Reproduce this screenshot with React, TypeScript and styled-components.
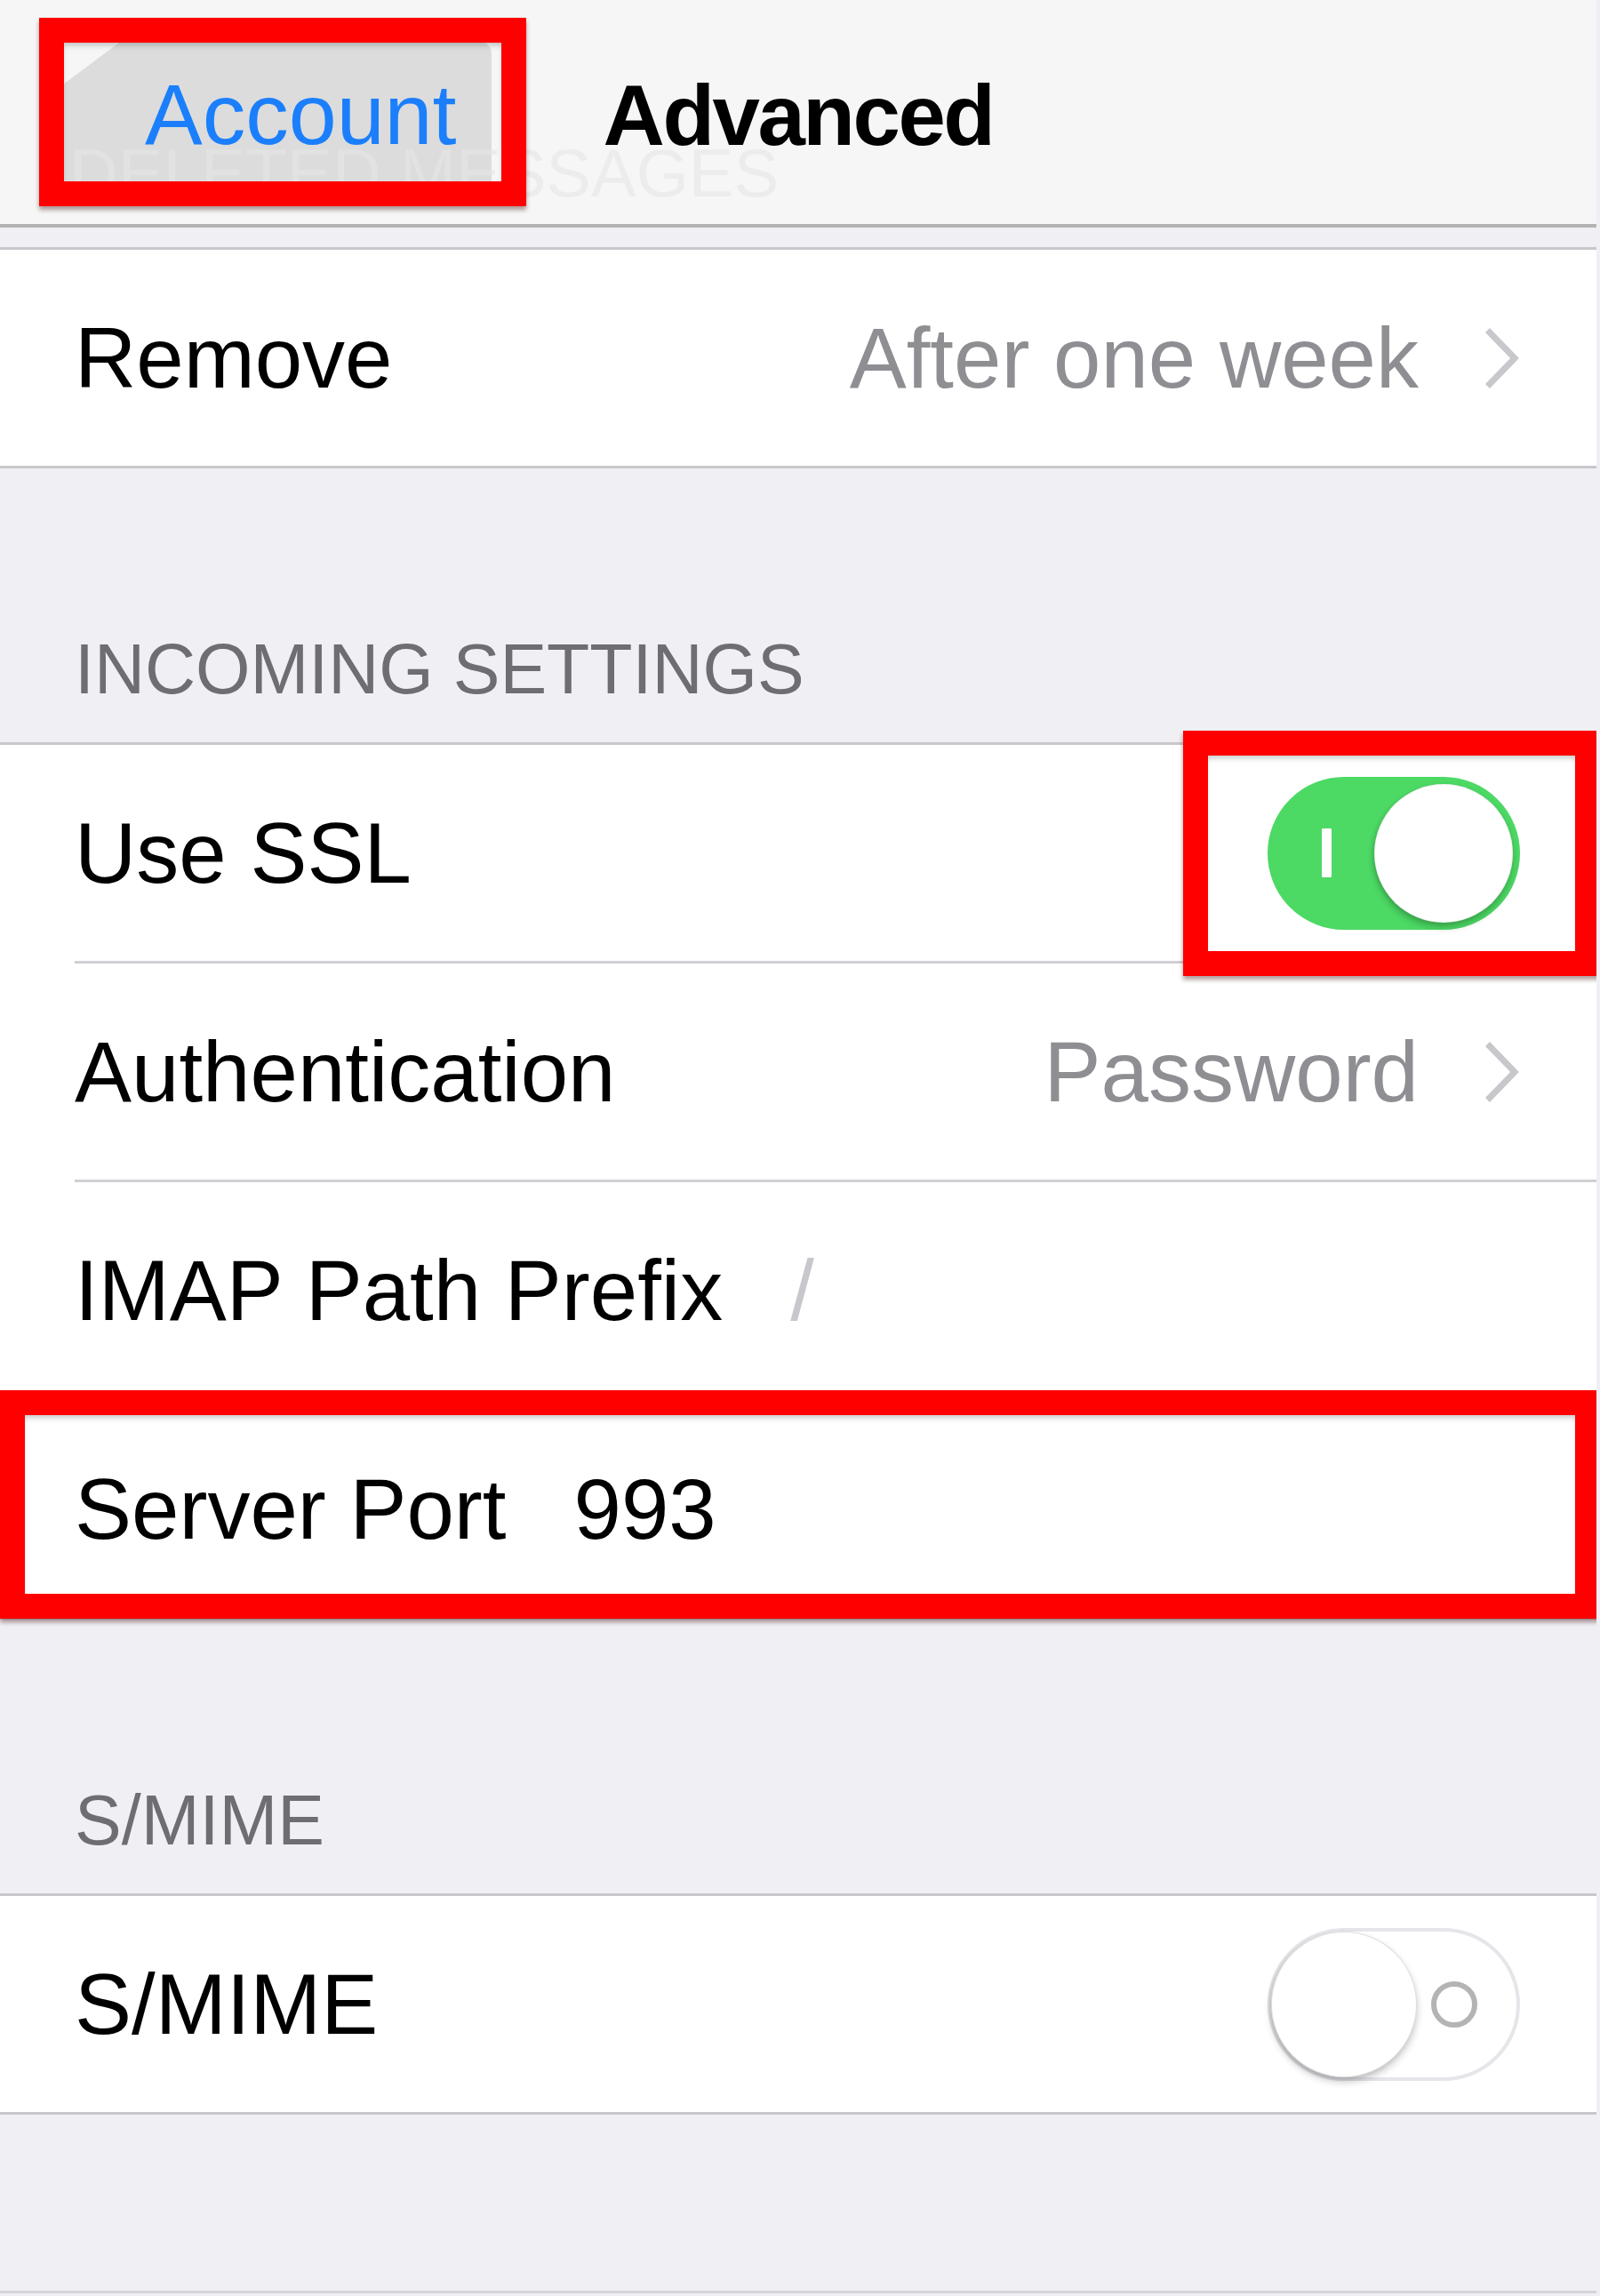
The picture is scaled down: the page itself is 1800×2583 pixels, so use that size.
import React from "react";
import styled, { createGlobalStyle } from "styled-components";

const GlobalStyle = createGlobalStyle`
  html, body {
    margin: 0;
    padding: 0;
    overflow: hidden;
  }
  body {
    background: #eff0f5;
    font-family: "Liberation Sans", Arial, Helvetica, sans-serif;
    -webkit-font-smoothing: antialiased;
  }
`;

const Page = styled.div`
  width: 1796px;
  height: 2583px;
  overflow: hidden;
  background: #efeff4;
`;

const NavBar = styled.header`
  position: relative;
  isolation: isolate;
  height: 256px;
  box-sizing: border-box;
  padding-top: 7px;
  background: #f6f6f6;
  border-bottom: 4px solid #b2b2b2;
  display: grid;
  grid-template-columns: 1fr auto 1fr;
  align-items: center;
`;

const BackButton = styled.div`
  position: relative;
  justify-self: start;
  margin-left: 51px;
  width: 502px;
  height: 169px;
  box-sizing: border-box;
  padding-left: 112px;
  display: flex;
  align-items: center;

  &::before {
    content: "";
    position: absolute;
    inset: 0;
    z-index: 0;
    background: #dcdcdc;
    border-top-right-radius: 16px;
    clip-path: polygon(87px 0, 100% 0, 100% 100%, 0 100%, 0 65px);
  }
`;

const BackLabel = styled.span`
  position: relative;
  z-index: 2;
  font-size: 97px;
  line-height: 0.75;
  color: #1b7ffb;
  white-space: nowrap;
`;

const NavTitle = styled.h1`
  grid-column: 2;
  margin: 0;
  font-size: 96px;
  line-height: 0.75;
  font-weight: 700;
  letter-spacing: -2.5px;
  color: #000;
  white-space: nowrap;
`;

const GhostHeader = styled.span`
  position: absolute;
  left: 78px;
  top: 167px;
  z-index: 1;
  font-size: 76px;
  line-height: 56px;
  color: rgba(230, 230, 230, 0.6);
  white-space: nowrap;
  pointer-events: none;
`;

const Annotation = styled.div<{ $top: number; $left: number; $width: number; $height: number }>`
  position: absolute;
  z-index: 3;
  top: ${(p) => p.$top}px;
  left: ${(p) => p.$left}px;
  width: ${(p) => p.$width}px;
  height: ${(p) => p.$height}px;
  box-sizing: border-box;
  border: 28px solid #ff0000;
  box-shadow: 0 4px 5px rgba(60, 0, 0, 0.4), inset 0 5px 6px -2px rgba(0, 0, 0, 0.22);
  pointer-events: none;
`;

const Content = styled.main`
  padding-top: 22px;
`;

const Group = styled.section`
  background: #ffffff;
  border-top: 3px solid #c8c7cc;
  border-bottom: 3px solid #c8c7cc;
`;

const Row = styled.div`
  position: relative;
  display: flex;
  padding-left: 84px;
`;

const RowBody = styled.div<{ $divider?: boolean }>`
  flex: 1;
  height: 243px;
  display: flex;
  align-items: center;
  padding-right: 86px;
  border-top: ${(p) => (p.$divider ? "3px solid #cfcfd4" : "none")};
`;

const Label = styled.span`
  font-size: 96px;
  line-height: 1;
  color: #000;
  white-space: nowrap;
`;

const DetailValue = styled.span`
  margin-left: auto;
  font-size: 96px;
  line-height: 1;
  color: #8e8e93;
  white-space: nowrap;
`;

const FieldValue = styled.span<{ $muted?: boolean }>`
  margin-left: 76px;
  font-size: 96px;
  line-height: 1;
  color: ${(p) => (p.$muted ? "#c7c7cc" : "#000")};
  white-space: nowrap;
`;

const ChevronIcon = styled.svg`
  flex: none;
  margin-left: 74px;
  width: 40px;
  height: 70px;
`;

const SectionHeader = styled.h2`
  margin: 0;
  height: 308px;
  box-sizing: border-box;
  display: flex;
  align-items: flex-end;
  padding: 0 0 43px 84px;
  font-size: 79px;
  line-height: 79px;
  font-weight: 400;
  color: #6d6d72;
  white-space: nowrap;
`;

const SwitchWrap = styled.div`
  position: relative;
  margin-left: auto;
  display: flex;
`;

const SwitchTrack = styled.div<{ $on: boolean }>`
  width: 284px;
  height: 172px;
  box-sizing: border-box;
  border-radius: 86px;
  border: 4px solid ${(p) => (p.$on ? "#4cd964" : "#e5e5ea")};
  background: ${(p) => (p.$on ? "#4cd964" : "#ffffff")};
  display: flex;
  align-items: center;
`;

const Knob = styled.div<{ $on: boolean }>`
  flex: none;
  width: ${(p) => (p.$on ? 156 : 164)}px;
  height: ${(p) => (p.$on ? 156 : 164)}px;
  margin-left: ${(p) => (p.$on ? "auto" : "0")};
  margin-right: ${(p) => (p.$on ? 4 : 0)}px;
  box-sizing: border-box;
  border-radius: 50%;
  background: #ffffff;
  border: 1px solid rgba(0, 0, 0, ${(p) => (p.$on ? 0.06 : 0.12)});
  box-shadow: 0 5px 8px rgba(0, 0, 0, 0.22), -2px 2px 4px rgba(0, 0, 0, 0.08);
`;

const OnMark = styled.div`
  flex: none;
  margin-left: 57px;
  width: 11px;
  height: 55px;
  background: #ffffff;
  border-radius: 1px;
`;

const OffMark = styled.div`
  flex: none;
  margin-left: 16px;
  width: 52px;
  height: 52px;
  box-sizing: border-box;
  border-radius: 50%;
  border: 6px solid #b4b4b4;
`;

const Tail = styled.div`
  margin-top: 198px;
  height: 20px;
  border-top: 3px solid #d6d6da;
`;

const Chevron = () => (
  <ChevronIcon viewBox="0 0 40 70">
    <polyline
      points="3.5,3.5 34,35 3.5,66.5"
      fill="none"
      stroke="#c7c7cc"
      strokeWidth="7"
      strokeLinejoin="miter"
    />
  </ChevronIcon>
);

const Switch = ({ on }: { on: boolean }) => (
  <SwitchTrack $on={on}>
    {on ? (
      <>
        <OnMark />
        <Knob $on />
      </>
    ) : (
      <>
        <Knob $on={false} />
        <OffMark />
      </>
    )}
  </SwitchTrack>
);

export default function App() {
  return (
    <>
      <GlobalStyle />
      <Page>
        <NavBar>
          <GhostHeader>DELETED MESSAGES</GhostHeader>
          <BackButton>
            <BackLabel>Account</BackLabel>
            <Annotation $top={-25} $left={-7} $width={548} $height={212} />
          </BackButton>
          <NavTitle>Advanced</NavTitle>
        </NavBar>

        <Content>
          <Group>
            <Row>
              <RowBody>
                <Label>Remove</Label>
                <DetailValue>After one week</DetailValue>
                <Chevron />
              </RowBody>
            </Row>
          </Group>

          <SectionHeader>INCOMING SETTINGS</SectionHeader>
          <Group>
            <Row>
              <RowBody>
                <Label>Use SSL</Label>
                <SwitchWrap>
                  <Switch on />
                  <Annotation $top={-52} $left={-95} $width={469} $height={276} />
                </SwitchWrap>
              </RowBody>
            </Row>
            <Row>
              <RowBody $divider>
                <Label>Authentication</Label>
                <DetailValue>Password</DetailValue>
                <Chevron />
              </RowBody>
            </Row>
            <Row>
              <RowBody $divider>
                <Label>IMAP Path Prefix</Label>
                <FieldValue $muted>/</FieldValue>
              </RowBody>
            </Row>
            <Row>
              <RowBody $divider>
                <Label>Server Port</Label>
                <FieldValue>993</FieldValue>
              </RowBody>
              <Annotation $top={-9} $left={0} $width={1800} $height={257} />
            </Row>
          </Group>

          <SectionHeader>S/MIME</SectionHeader>
          <Group>
            <Row>
              <RowBody>
                <Label>S/MIME</Label>
                <SwitchWrap>
                  <Switch on={false} />
                </SwitchWrap>
              </RowBody>
            </Row>
          </Group>
          <Tail />
        </Content>
      </Page>
    </>
  );
}
